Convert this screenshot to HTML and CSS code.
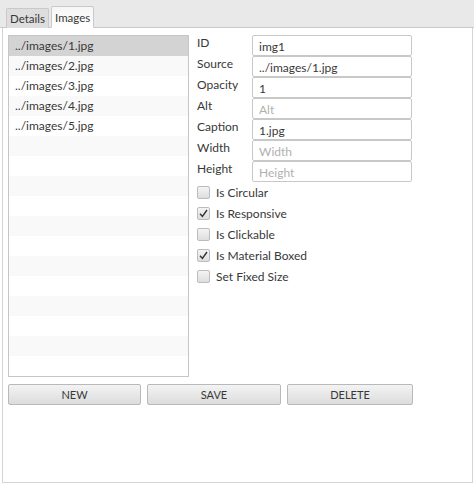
FILE: index.html
```html
<!DOCTYPE html>
<html>
<head>
<meta charset="utf-8">
<link rel="stylesheet" href="styles.css">
</head>
<body>
<div class="window">
  <div class="tabbar">
    <div class="tab">Details</div>
    <div class="tab active">Images</div>
  </div>
  <div class="pane">
    <div class="main">
      <div class="list">
        <div class="row selected">../images/1.jpg</div>
        <div class="row">../images/2.jpg</div>
        <div class="row">../images/3.jpg</div>
        <div class="row">../images/4.jpg</div>
        <div class="row">../images/5.jpg</div>
        <div class="row"></div>
        <div class="row"></div>
        <div class="row"></div>
        <div class="row"></div>
        <div class="row"></div>
        <div class="row"></div>
        <div class="row"></div>
        <div class="row"></div>
        <div class="row"></div>
        <div class="row"></div>
        <div class="row"></div>
        <div class="row"></div>
      </div>
      <div class="form">
        <div class="fields">
          <label class="label">ID</label><div class="input">img1</div>
          <label class="label">Source</label><div class="input">../images/1.jpg</div>
          <label class="label">Opacity</label><div class="input">1</div>
          <label class="label">Alt</label><div class="input placeholder">Alt</div>
          <label class="label">Caption</label><div class="input">1.jpg</div>
          <label class="label">Width</label><div class="input placeholder">Width</div>
          <label class="label">Height</label><div class="input placeholder">Height</div>
        </div>
        <div class="checks">
          <div class="check"><span class="box"></span><span>Is Circular</span></div>
          <div class="check"><span class="box"><svg viewBox="0 0 13 13" width="13" height="13"><path d="M3 6.8 L5.4 9.4 L10 3" fill="none" stroke="#333" stroke-width="1.4"/></svg></span><span>Is Responsive</span></div>
          <div class="check"><span class="box"></span><span>Is Clickable</span></div>
          <div class="check"><span class="box"><svg viewBox="0 0 13 13" width="13" height="13"><path d="M3 6.8 L5.4 9.4 L10 3" fill="none" stroke="#333" stroke-width="1.4"/></svg></span><span>Is Material Boxed</span></div>
          <div class="check"><span class="box"></span><span>Set Fixed Size</span></div>
        </div>
      </div>
    </div>
    <div class="buttons">
      <button class="btn btn-new">NEW</button>
      <button class="btn btn-save">SAVE</button>
      <button class="btn btn-delete">DELETE</button>
    </div>
  </div>
</div>
</body>
</html>
```

FILE: styles.css
```css
html, body {
  margin: 0;
  padding: 0;
  background: #ffffff;
}
body {
  font-family: "Lato", "Open Sans", sans-serif;
  font-size: 12px;
  color: #383838;
}
.window {
  width: 474px;
  height: 485px;
  background: #ffffff;
}
.tabbar {
  height: 28px;
  box-sizing: border-box;
  background: #e9e9e9;
  border-bottom: 1px solid #c9c9c9;
  display: flex;
  align-items: flex-end;
  padding-left: 6px;
  gap: 2px;
}
.tab {
  box-sizing: border-box;
  height: 20px;
  margin-bottom: -1px;
  padding: 0 3px;
  line-height: 19px;
  font-size: 11.5px;
  color: #383838;
  background: #dedede;
  border: 1px solid #c9c9c9;
  border-bottom: none;
  border-radius: 2px 2px 0 0;
}
.tab.active {
  height: 22px;
  line-height: 22px;
  border-bottom: 1px solid #ffffff;
  background: linear-gradient(#f5f5f5, #ffffff);
}
.pane {
  box-sizing: border-box;
  margin-left: 2px;
  width: 471px;
  height: 455px;
  border: 1px solid #d4d4d4;
  border-top: none;
  padding: 7px 0 0 5px;
}
.main {
  display: flex;
  align-items: flex-start;
}
.list {
  box-sizing: border-box;
  width: 181px;
  height: 342px;
  border: 1px solid #c6c6c6;
  background: #ffffff;
}
.row {
  height: 20px;
  line-height: 20px;
  padding-left: 6px;
  background: #ffffff;
}
.row:nth-child(even) {
  background: #f9f9f9;
}
.row.selected {
  background: #d3d3d3;
}
.form {
  margin-left: 8px;
}
.fields {
  display: grid;
  grid-template-columns: 55px 160px;
  grid-auto-rows: 21px;
}
.label {
  line-height: 15px;
}
.input {
  box-sizing: border-box;
  height: 21px;
  border: 1px solid #c8c8c8;
  border-radius: 2px;
  padding-left: 6px;
  line-height: 19px;
  padding-top: 1px;
  background: #ffffff;
}
.input.placeholder {
  color: #b0b0b0;
}
.checks {
  display: flex;
  flex-direction: column;
}
.check {
  height: 21px;
  display: flex;
  align-items: center;
  gap: 6px;
}
.box {
  box-sizing: border-box;
  width: 13px;
  height: 13px;
  border: 1px solid #bcbcbc;
  border-radius: 2px;
  background: linear-gradient(#f4f4f4, #dedede);
  display: block;
  position: relative;
}
.box svg {
  position: absolute;
  left: -1px;
  top: -1px;
}
.buttons {
  display: flex;
  gap: 6px;
  margin-top: 7px;
}
.btn {
  box-sizing: border-box;
  height: 21px;
  font-family: "Lato", "Open Sans", sans-serif;
  font-size: 11px;
  color: #383838;
  border: 1px solid #b9b9b9;
  border-radius: 2px;
  background: linear-gradient(#f3f3f3, #dcdcdc);
  padding: 0;
}
.btn-new { width: 133px; }
.btn-save { width: 134px; }
.btn-delete { width: 126px; }
```
